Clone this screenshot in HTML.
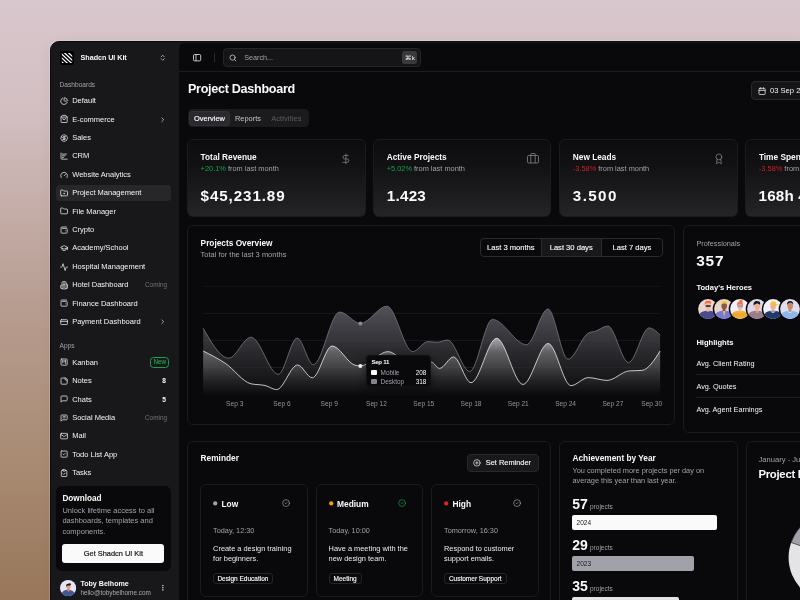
<!DOCTYPE html>
<html lang="en"><head><meta charset="utf-8"><title>Project Dashboard</title>
<style>
html,body{margin:0;padding:0}
body{width:800px;height:600px;overflow:hidden;position:relative;font-family:"Liberation Sans", sans-serif;
background:linear-gradient(180deg,#d8c7cd 0%,#d3bfc2 18%,#b89e92 50%,#a88a72 78%,#98775a 100%)}
.b,.t,.ic{position:absolute}
.t{white-space:nowrap}
.ic{display:block;overflow:visible}
#root{position:absolute;left:0;top:0;width:800px;height:600px;overflow:hidden;will-change:transform}
</style></head><body><div id="root">
<div class="b" style="left:50px;top:41px;width:760px;height:570px;background:#18181b;border-radius:9px 0 0 0;border:1px solid #0b0b0d;box-sizing:border-box;box-shadow:0 0 0 1px rgba(255,255,255,.2), 0 2px 14px rgba(60,30,20,.06)"></div>
<div class="b" style="left:179px;top:43px;width:640px;height:570px;background:#09090b;border-radius:5px 0 0 0"></div>
<svg class="ic" style="left:60px;top:51px" width="14" height="14" viewBox="0 0 14 14"><rect width="14" height="14" rx="2.2" fill="#000"/><clipPath id="lc"><rect x="1.8" y="1.9" width="10.5" height="10.2"/></clipPath><g clip-path="url(#lc)" stroke="#fff" stroke-width="1.25"><line x1="-12.2" y1="-2.2" x2="7.800000000000001" y2="16.4"/><line x1="-8.1" y1="-2.2" x2="11.9" y2="16.4"/><line x1="-4" y1="-2.2" x2="16" y2="16.4"/><line x1="0.09999999999999964" y1="-2.2" x2="20.1" y2="16.4"/><line x1="4.199999999999999" y1="-2.2" x2="24.2" y2="16.4"/></g></svg>
<div class="t" style="top:52.4px;font-size:7.2px;font-weight:700;color:#fafafa;line-height:12px;left:80.6px;letter-spacing:-.05px;">Shadcn UI Kit</div>
<svg class="ic" style="left:159.25px;top:54.25px" width="7.5" height="7.5" viewBox="0 0 24 24" fill="none" stroke="#d4d4d8" stroke-width="2.3" stroke-linecap="round" stroke-linejoin="round" ><path d="m7 15 5 5 5-5"/><path d="m7 9 5-5 5 5"/></svg>
<div class="t" style="top:78.5px;font-size:6.6px;font-weight:400;color:#a1a1aa;line-height:12px;left:59.6px;">Dashboards</div>
<div class="b" style="left:56px;top:184.8px;width:115px;height:15.8px;background:#27272a;border-radius:3.5px"></div>
<svg class="ic" style="left:59.8px;top:96.9px" width="8.2" height="8.2" viewBox="0 0 24 24" fill="none" stroke="#e4e4e7" stroke-width="2.3" stroke-linecap="round" stroke-linejoin="round" ><path d="M21 12c.552 0 1.005-.449.95-.998a10 10 0 0 0-8.953-8.951c-.55-.055-.998.398-.998.95v8a1 1 0 0 0 1 1z"/><path d="M21.21 15.89A10 10 0 1 1 8 2.83"/></svg>
<div class="t" style="top:95.2px;font-size:7.5px;font-weight:400;color:#f4f4f5;line-height:12px;left:72.2px;">Default</div>
<svg class="ic" style="left:59.8px;top:115.3px" width="8.2" height="8.2" viewBox="0 0 24 24" fill="none" stroke="#e4e4e7" stroke-width="2.3" stroke-linecap="round" stroke-linejoin="round" ><path d="M6 2 3 6v14a2 2 0 0 0 2 2h14a2 2 0 0 0 2-2V6l-3-4Z"/><path d="M3 6h18"/><path d="M16 10a4 4 0 0 1-8 0"/></svg>
<div class="t" style="top:113.6px;font-size:7.5px;font-weight:400;color:#f4f4f5;line-height:12px;left:72.2px;">E-commerce</div>
<svg class="ic" style="left:59.8px;top:133.7px" width="8.2" height="8.2" viewBox="0 0 24 24" fill="none" stroke="#e4e4e7" stroke-width="2.3" stroke-linecap="round" stroke-linejoin="round" ><path d="M3.85 8.62a4 4 0 0 1 4.78-4.77 4 4 0 0 1 6.74 0 4 4 0 0 1 4.78 4.78 4 4 0 0 1 0 6.74 4 4 0 0 1-4.77 4.78 4 4 0 0 1-6.75 0 4 4 0 0 1-4.78-4.77 4 4 0 0 1 0-6.76Z"/><path d="M16 8h-6a2 2 0 1 0 0 4h4a2 2 0 1 1 0 4H8"/><path d="M12 18V6"/></svg>
<div class="t" style="top:132.0px;font-size:7.5px;font-weight:400;color:#f4f4f5;line-height:12px;left:72.2px;">Sales</div>
<svg class="ic" style="left:59.8px;top:152.1px" width="8.2" height="8.2" viewBox="0 0 24 24" fill="none" stroke="#e4e4e7" stroke-width="2.3" stroke-linecap="round" stroke-linejoin="round" ><path d="M3 3v16a2 2 0 0 0 2 2h16"/><path d="M7 11h8"/><path d="M7 16h3"/><path d="M7 6h12"/></svg>
<div class="t" style="top:150.4px;font-size:7.5px;font-weight:400;color:#f4f4f5;line-height:12px;left:72.2px;">CRM</div>
<svg class="ic" style="left:59.8px;top:170.5px" width="8.2" height="8.2" viewBox="0 0 24 24" fill="none" stroke="#e4e4e7" stroke-width="2.3" stroke-linecap="round" stroke-linejoin="round" ><path d="m12 14 4-4"/><path d="M3.34 19a10 10 0 1 1 17.32 0"/></svg>
<div class="t" style="top:168.8px;font-size:7.5px;font-weight:400;color:#f4f4f5;line-height:12px;left:72.2px;">Website Analytics</div>
<svg class="ic" style="left:59.8px;top:188.9px" width="8.2" height="8.2" viewBox="0 0 24 24" fill="none" stroke="#e4e4e7" stroke-width="2.3" stroke-linecap="round" stroke-linejoin="round" ><path d="M4 20h16a2 2 0 0 0 2-2V8a2 2 0 0 0-2-2h-7.93a2 2 0 0 1-1.66-.9l-.82-1.2A2 2 0 0 0 7.93 3H4a2 2 0 0 0-2 2v13c0 1.1.9 2 2 2Z"/><circle cx="12" cy="13" r="1"/></svg>
<div class="t" style="top:187.2px;font-size:7.5px;font-weight:400;color:#f4f4f5;line-height:12px;left:72.2px;">Project Management</div>
<svg class="ic" style="left:59.8px;top:207.3px" width="8.2" height="8.2" viewBox="0 0 24 24" fill="none" stroke="#e4e4e7" stroke-width="2.3" stroke-linecap="round" stroke-linejoin="round" ><path d="M20 20a2 2 0 0 0 2-2V8a2 2 0 0 0-2-2h-7.9a2 2 0 0 1-1.69-.9L9.6 3.9A2 2 0 0 0 7.93 3H4a2 2 0 0 0-2 2v13a2 2 0 0 0 2 2Z"/></svg>
<div class="t" style="top:205.6px;font-size:7.5px;font-weight:400;color:#f4f4f5;line-height:12px;left:72.2px;">File Manager</div>
<svg class="ic" style="left:59.8px;top:225.7px" width="8.2" height="8.2" viewBox="0 0 24 24" fill="none" stroke="#e4e4e7" stroke-width="2.3" stroke-linecap="round" stroke-linejoin="round" ><path d="M17 14h.01"/><path d="M7 7h12a2 2 0 0 1 2 2v10a2 2 0 0 1-2 2H5a2 2 0 0 1-2-2V5a2 2 0 0 1 2-2h14"/></svg>
<div class="t" style="top:224.0px;font-size:7.5px;font-weight:400;color:#f4f4f5;line-height:12px;left:72.2px;">Crypto</div>
<svg class="ic" style="left:59.8px;top:244.1px" width="8.2" height="8.2" viewBox="0 0 24 24" fill="none" stroke="#e4e4e7" stroke-width="2.3" stroke-linecap="round" stroke-linejoin="round" ><path d="M21.42 10.922a1 1 0 0 0-.019-1.838L12.83 5.18a2 2 0 0 0-1.66 0L2.6 9.08a1 1 0 0 0 0 1.832l8.57 3.908a2 2 0 0 0 1.66 0z"/><path d="M22 10v6"/><path d="M6 12.5V16a6 3 0 0 0 12 0v-3.5"/></svg>
<div class="t" style="top:242.4px;font-size:7.5px;font-weight:400;color:#f4f4f5;line-height:12px;left:72.2px;">Academy/School</div>
<svg class="ic" style="left:59.8px;top:262.5px" width="8.2" height="8.2" viewBox="0 0 24 24" fill="none" stroke="#e4e4e7" stroke-width="2.3" stroke-linecap="round" stroke-linejoin="round" ><path d="M22 12h-2.48a2 2 0 0 0-1.93 1.46l-2.35 8.36a.25.25 0 0 1-.48 0L9.24 2.18a.25.25 0 0 0-.48 0l-2.35 8.36A2 2 0 0 1 4.49 12H2"/></svg>
<div class="t" style="top:260.8px;font-size:7.5px;font-weight:400;color:#f4f4f5;line-height:12px;left:72.2px;">Hospital Management</div>
<svg class="ic" style="left:59.8px;top:280.9px" width="8.2" height="8.2" viewBox="0 0 24 24" fill="none" stroke="#e4e4e7" stroke-width="2.3" stroke-linecap="round" stroke-linejoin="round" ><path d="M6 22V4a2 2 0 0 1 2-2h8a2 2 0 0 1 2 2v18Z"/><path d="M6 12H4a2 2 0 0 0-2 2v6a2 2 0 0 0 2 2h2"/><path d="M18 9h2a2 2 0 0 1 2 2v9a2 2 0 0 1-2 2h-2"/><path d="M10 6h4"/><path d="M10 10h4"/><path d="M10 14h4"/><path d="M10 18h4"/></svg>
<div class="t" style="top:279.2px;font-size:7.5px;font-weight:400;color:#f4f4f5;line-height:12px;left:72.2px;">Hotel Dashboard</div>
<svg class="ic" style="left:59.8px;top:299.3px" width="8.2" height="8.2" viewBox="0 0 24 24" fill="none" stroke="#e4e4e7" stroke-width="2.3" stroke-linecap="round" stroke-linejoin="round" ><path d="M17 14h.01"/><path d="M7 7h12a2 2 0 0 1 2 2v10a2 2 0 0 1-2 2H5a2 2 0 0 1-2-2V5a2 2 0 0 1 2-2h14"/></svg>
<div class="t" style="top:297.6px;font-size:7.5px;font-weight:400;color:#f4f4f5;line-height:12px;left:72.2px;">Finance Dashboard</div>
<svg class="ic" style="left:59.8px;top:317.7px" width="8.2" height="8.2" viewBox="0 0 24 24" fill="none" stroke="#e4e4e7" stroke-width="2.3" stroke-linecap="round" stroke-linejoin="round" ><rect width="20" height="14" x="2" y="5" rx="2"/><line x1="2" x2="22" y1="10" y2="10"/></svg>
<div class="t" style="top:316.0px;font-size:7.5px;font-weight:400;color:#f4f4f5;line-height:12px;left:72.2px;">Payment Dashboard</div>
<svg class="ic" style="left:159.05px;top:115.65px" width="7.5" height="7.5" viewBox="0 0 24 24" fill="none" stroke="#d4d4d8" stroke-width="2.3" stroke-linecap="round" stroke-linejoin="round" ><path d="m9 18 6-6-6-6"/></svg>
<svg class="ic" style="left:159.05px;top:318.05px" width="7.5" height="7.5" viewBox="0 0 24 24" fill="none" stroke="#d4d4d8" stroke-width="2.3" stroke-linecap="round" stroke-linejoin="round" ><path d="m9 18 6-6-6-6"/></svg>
<div class="t" style="top:279.2px;font-size:6.4px;font-weight:400;color:#71717a;line-height:12px;right:633px;text-align:right;">Coming</div>
<div class="t" style="top:340.4px;font-size:6.6px;font-weight:400;color:#a1a1aa;line-height:12px;left:59.6px;">Apps</div>
<svg class="ic" style="left:59.8px;top:358.4px" width="8.2" height="8.2" viewBox="0 0 24 24" fill="none" stroke="#e4e4e7" stroke-width="2.3" stroke-linecap="round" stroke-linejoin="round" ><rect width="18" height="18" x="3" y="3" rx="2"/><path d="M8 7v7"/><path d="M12 7v4"/><path d="M16 7v9"/></svg>
<div class="t" style="top:356.7px;font-size:7.5px;font-weight:400;color:#f4f4f5;line-height:12px;left:72.2px;">Kanban</div>
<svg class="ic" style="left:59.8px;top:376.9px" width="8.2" height="8.2" viewBox="0 0 24 24" fill="none" stroke="#e4e4e7" stroke-width="2.3" stroke-linecap="round" stroke-linejoin="round" ><path d="M16 3H5a2 2 0 0 0-2 2v14a2 2 0 0 0 2 2h14a2 2 0 0 0 2-2V8Z"/><path d="M15 3v4a2 2 0 0 0 2 2h4"/></svg>
<div class="t" style="top:375.2px;font-size:7.5px;font-weight:400;color:#f4f4f5;line-height:12px;left:72.2px;">Notes</div>
<svg class="ic" style="left:59.8px;top:395.2px" width="8.2" height="8.2" viewBox="0 0 24 24" fill="none" stroke="#e4e4e7" stroke-width="2.3" stroke-linecap="round" stroke-linejoin="round" ><path d="M21 15a2 2 0 0 1-2 2H7l-4 4V5a2 2 0 0 1 2-2h14a2 2 0 0 1 2 2z"/></svg>
<div class="t" style="top:393.5px;font-size:7.5px;font-weight:400;color:#f4f4f5;line-height:12px;left:72.2px;">Chats</div>
<svg class="ic" style="left:59.8px;top:413.6px" width="8.2" height="8.2" viewBox="0 0 24 24" fill="none" stroke="#e4e4e7" stroke-width="2.3" stroke-linecap="round" stroke-linejoin="round" ><path d="M21 15a2 2 0 0 1-2 2H7l-4 4V5a2 2 0 0 1 2-2h14a2 2 0 0 1 2 2z"/><path d="M14.8 7.5a1.84 1.84 0 0 0-2.6 0l-.2.3-.3-.3a1.84 1.84 0 1 0-2.4 2.8L12 13l2.7-2.7c.9-.9.8-2.1.1-2.8"/></svg>
<div class="t" style="top:411.9px;font-size:7.5px;font-weight:400;color:#f4f4f5;line-height:12px;left:72.2px;">Social Media</div>
<svg class="ic" style="left:59.8px;top:432.1px" width="8.2" height="8.2" viewBox="0 0 24 24" fill="none" stroke="#e4e4e7" stroke-width="2.3" stroke-linecap="round" stroke-linejoin="round" ><rect width="20" height="16" x="2" y="4" rx="2"/><path d="m22 7-8.97 5.7a1.94 1.94 0 0 1-2.06 0L2 7"/></svg>
<div class="t" style="top:430.4px;font-size:7.5px;font-weight:400;color:#f4f4f5;line-height:12px;left:72.2px;">Mail</div>
<svg class="ic" style="left:59.8px;top:450.4px" width="8.2" height="8.2" viewBox="0 0 24 24" fill="none" stroke="#e4e4e7" stroke-width="2.3" stroke-linecap="round" stroke-linejoin="round" ><rect width="18" height="18" x="3" y="3" rx="2"/><path d="m9 12 2 2 4-4"/></svg>
<div class="t" style="top:448.7px;font-size:7.5px;font-weight:400;color:#f4f4f5;line-height:12px;left:72.2px;">Todo List App</div>
<svg class="ic" style="left:59.8px;top:468.9px" width="8.2" height="8.2" viewBox="0 0 24 24" fill="none" stroke="#e4e4e7" stroke-width="2.3" stroke-linecap="round" stroke-linejoin="round" ><rect width="8" height="4" x="8" y="2" rx="1" ry="1"/><path d="M16 4h2a2 2 0 0 1 2 2v14a2 2 0 0 1-2 2H6a2 2 0 0 1-2-2V6a2 2 0 0 1 2-2h2"/><path d="m9 14 2 2 4-4"/></svg>
<div class="t" style="top:467.2px;font-size:7.5px;font-weight:400;color:#f4f4f5;line-height:12px;left:72.2px;">Tasks</div>
<div class="b" style="left:150.3px;top:357.2px;width:18.8px;height:10.7px;border:1px solid #16a34a;border-radius:3.5px;box-sizing:border-box"></div>
<div class="t" style="top:356.2px;font-size:6.3px;font-weight:400;color:#1fb655;line-height:12px;left:59.8px;width:200px;text-align:center;">New</div>
<div class="t" style="top:375.0px;font-size:6.6px;font-weight:700;color:#fafafa;line-height:12px;right:634px;text-align:right;">8</div>
<div class="t" style="top:393.9px;font-size:6.6px;font-weight:700;color:#fafafa;line-height:12px;right:634px;text-align:right;">5</div>
<div class="t" style="top:411.7px;font-size:6.4px;font-weight:400;color:#71717a;line-height:12px;right:633px;text-align:right;">Coming</div>
<div class="b" style="left:56px;top:486px;width:114.5px;height:85px;background:#09090b;border-radius:6px"></div>
<div class="t" style="top:493.0px;font-size:8.2px;font-weight:700;color:#fafafa;line-height:12px;left:62.4px;">Download</div>
<div class="t" style="top:505.0px;font-size:7.5px;font-weight:400;color:#a1a1aa;line-height:12px;left:62.4px;">Unlock lifetime access to all</div>
<div class="t" style="top:515.3px;font-size:7.5px;font-weight:400;color:#a1a1aa;line-height:12px;left:62.4px;">dashboards, templates and</div>
<div class="t" style="top:525.6px;font-size:7.5px;font-weight:400;color:#a1a1aa;line-height:12px;left:62.4px;">components.</div>
<div class="b" style="left:62.4px;top:544.4px;width:102px;height:18.2px;background:#fafafa;border-radius:3px"></div>
<div class="t" style="top:547.6px;font-size:7.4px;font-weight:400;color:#18181b;line-height:12px;left:13.4px;width:200px;text-align:center;-webkit-text-stroke:.2px #18181b;">Get Shadcn UI Kit</div>
<svg class="ic" style="left:60px;top:579.6px" width="16.2" height="16.2" viewBox="0 0 16 16"><clipPath id="uc"><circle cx="8" cy="8" r="8"/></clipPath><g clip-path="url(#uc)"><rect width="16" height="16" fill="#e9e4f4"/><path d="M1.200 17c0-5 2.200-7.300 6.600-7.300s7.400 2.300 7.400 7.300z" fill="#3f5794"/><path d="M7.200 8.600h2.300v2.200l-1.300.7-1-.7z" fill="#e08a60"/><ellipse cx="8.500" cy="7" rx="2" ry="2.400" fill="#ea9a70"/><path d="M6.300 6.800c-.7-2.100.4-3.200 1.900-3 .9-.9 2.500-.9 2.600.4.100.9-.5 1.300-1.200 1.300-1 .1-1.800-.2-2.300.2-.4.300-.6.700-1 1.100z" fill="#1b1b25"/></g></svg>
<div class="t" style="top:577.8px;font-size:7.1px;font-weight:700;color:#fafafa;line-height:12px;left:80.4px;">Toby Belhome</div>
<div class="t" style="top:586.6px;font-size:6.4px;font-weight:400;color:#a8a8b0;line-height:12px;left:80.4px;">hello@tobybelhome.com</div>
<svg class="ic" style="left:159.25px;top:584.25px" width="7.5" height="7.5" viewBox="0 0 24 24" fill="none" stroke="#d4d4d8" stroke-width="2.3" stroke-linecap="round" stroke-linejoin="round" ><circle cx="12" cy="12" r="1"/><circle cx="12" cy="5" r="1"/><circle cx="12" cy="19" r="1"/></svg>
<div class="b" style="left:179px;top:71px;width:640px;height:1px;background:#1d1d20"></div>
<svg class="ic" style="left:192.8px;top:53.6px" width="8.2" height="7.4" viewBox="0 0 8.2 7.4" fill="none" stroke="#e4e4e7" stroke-width=".85"><rect x=".5" y=".5" width="7.2" height="6.4" rx="1.2"/><path d="M3 .5v6.400"/></svg>
<div class="b" style="left:214px;top:53.2px;width:1px;height:8.4px;background:#2a2a2e"></div>
<div class="b" style="left:223.2px;top:48.4px;width:198px;height:18.2px;background:#151518;border:1px solid #252528;border-radius:4px;box-sizing:border-box"></div>
<svg class="ic" style="left:229.4px;top:53.7px" width="7.8" height="7.8" viewBox="0 0 24 24" fill="none" stroke="#d4d4d8" stroke-width="2.3" stroke-linecap="round" stroke-linejoin="round" ><circle cx="11" cy="11" r="8"/><path d="m21 21-4.3-4.3"/></svg>
<div class="t" style="top:51.6px;font-size:7.2px;font-weight:400;color:#a1a1aa;line-height:12px;left:244.3px;">Search...</div>
<div class="b" style="left:402.2px;top:51.2px;width:14.8px;height:12.7px;background:#39393c;border-radius:2.5px"></div>
<div class="t" style="top:51.7px;font-size:6.4px;font-weight:400;color:#fafafa;line-height:12px;left:405px;font-family:'DejaVu Sans',sans-serif;">&#8984;</div>
<div class="t" style="top:51.5px;font-size:6.2px;font-weight:400;color:#fafafa;line-height:12px;left:411.8px;">k</div>
<div class="t" style="top:80.8px;font-size:12.6px;font-weight:700;color:#fafafa;line-height:16px;left:188px;letter-spacing:-.3px;">Project Dashboard</div>
<div class="b" style="left:751px;top:81px;width:70px;height:19px;background:#151518;border:1px solid #29292d;border-radius:4px;box-sizing:border-box"></div>
<svg class="ic" style="left:757.5px;top:86.5px" width="8.2" height="8.2" viewBox="0 0 24 24" fill="none" stroke="#e4e4e7" stroke-width="2.3" stroke-linecap="round" stroke-linejoin="round" ><path d="M8 2v4"/><path d="M16 2v4"/><rect width="18" height="18" x="3" y="4" rx="2"/><path d="M3 10h18"/></svg>
<div class="t" style="top:84.7px;font-size:7.6px;font-weight:400;color:#f4f4f5;line-height:12px;left:770px;">03 Sep 2025 - 30 Sep 2025</div>
<div class="b" style="left:187.7px;top:108.7px;width:121px;height:18.5px;background:#1b1b1e;border-radius:4.5px"></div>
<div class="b" style="left:189.3px;top:110.7px;width:40.7px;height:14.9px;background:#2a2a2e;border-radius:3.2px;border:1px solid #323236;box-sizing:border-box"></div>
<div class="t" style="top:112.7px;font-size:7.45px;font-weight:400;color:#fafafa;line-height:12px;left:109.5px;width:200px;text-align:center;-webkit-text-stroke:.15px #fafafa;">Overview</div>
<div class="t" style="top:112.7px;font-size:7.45px;font-weight:400;color:#c4c4cb;line-height:12px;left:148px;width:200px;text-align:center;">Reports</div>
<div class="t" style="top:112.7px;font-size:7.45px;font-weight:400;color:#5c5c64;line-height:12px;left:186.3px;width:200px;text-align:center;letter-spacing:.1px;">Activities</div>
<div class="b" style="left:187px;top:139px;width:179px;height:78.2px;background:linear-gradient(180deg,#0c0c0e 0%,#121214 35%,#242427 100%);border:1px solid #1b1b1e;border-radius:6px;box-sizing:border-box"></div>
<div class="t" style="top:150.5px;font-size:8.3px;font-weight:700;color:#fafafa;line-height:12px;left:200.60000000000002px;">Total Revenue</div>
<div class="t" style="top:162.9px;font-size:7.4px;font-weight:400;color:#a1a1aa;line-height:12px;left:200.60000000000002px;"><span style="color:#16a34a">+20.1%</span> from last month</div>
<div class="t" style="top:186.1px;font-size:15.2px;font-weight:700;color:#fafafa;line-height:20px;left:200.60000000000002px;letter-spacing:0.89px;">$45,231.89</div>
<svg class="ic" style="left:340.4px;top:152.9px" width="11.8" height="11.8" viewBox="0 0 24 24" fill="none" stroke="#85858e" stroke-width="1.5" stroke-linecap="round" stroke-linejoin="round" ><line x1="12" x2="12" y1="2" y2="22"/><path d="M17 5H9.5a3.5 3.5 0 0 0 0 7h5a3.5 3.5 0 0 1 0 7H6"/></svg>
<div class="b" style="left:373px;top:139px;width:178px;height:78.2px;background:linear-gradient(180deg,#0c0c0e 0%,#121214 35%,#242427 100%);border:1px solid #1b1b1e;border-radius:6px;box-sizing:border-box"></div>
<div class="t" style="top:150.5px;font-size:8.3px;font-weight:700;color:#fafafa;line-height:12px;left:386.7px;">Active Projects</div>
<div class="t" style="top:162.9px;font-size:7.4px;font-weight:400;color:#a1a1aa;line-height:12px;left:386.7px;"><span style="color:#16a34a">+5.02%</span> from last month</div>
<div class="t" style="top:186.1px;font-size:15.2px;font-weight:700;color:#fafafa;line-height:20px;left:386.7px;letter-spacing:0.28px;">1.423</div>
<svg class="ic" style="left:526.5px;top:153px" width="12" height="10.5" viewBox="0 0 12 10.5" fill="none" stroke="#85858e" stroke-width=".8" stroke-linejoin="round"><rect x=".5" y="2.500" width="11" height="7.500" rx="1.200"/><path d="M3.800 2.500V1.300a.8.800 0 0 1 .8-.8h2.800a.8.800 0 0 1 .8.800V2.500M3.800 2.500V10M8.200 2.500V10"/></svg>
<div class="b" style="left:559px;top:139px;width:179px;height:78.2px;background:linear-gradient(180deg,#0c0c0e 0%,#121214 35%,#242427 100%);border:1px solid #1b1b1e;border-radius:6px;box-sizing:border-box"></div>
<div class="t" style="top:150.5px;font-size:8.3px;font-weight:700;color:#fafafa;line-height:12px;left:572.8px;">New Leads</div>
<div class="t" style="top:162.9px;font-size:7.4px;font-weight:400;color:#a1a1aa;line-height:12px;left:572.8px;"><span style="color:#d11f26">-3.58%</span> from last month</div>
<div class="t" style="top:186.1px;font-size:15.2px;font-weight:700;color:#fafafa;line-height:20px;left:572.8px;letter-spacing:1.4px;">3.500</div>
<svg class="ic" style="left:712.5px;top:152.7px" width="11.8" height="11.8" viewBox="0 0 24 24" fill="none" stroke="#85858e" stroke-width="1.5" stroke-linecap="round" stroke-linejoin="round" ><path d="m15.477 12.89 1.515 8.526a.5.5 0 0 1-.81.47l-3.58-2.687a1 1 0 0 0-1.197 0l-3.586 2.686a.5.5 0 0 1-.81-.469l1.514-8.526"/><circle cx="12" cy="8" r="6"/></svg>
<div class="b" style="left:745px;top:139px;width:179px;height:78.2px;background:linear-gradient(180deg,#0c0c0e 0%,#121214 35%,#242427 100%);border:1px solid #1b1b1e;border-radius:6px;box-sizing:border-box"></div>
<div class="t" style="top:150.5px;font-size:8.3px;font-weight:700;color:#fafafa;line-height:12px;left:758.9px;">Time Spent</div>
<div class="t" style="top:162.9px;font-size:7.4px;font-weight:400;color:#a1a1aa;line-height:12px;left:758.9px;"><span style="color:#d11f26">-3.58%</span> from last month</div>
<div class="t" style="top:186.1px;font-size:15.2px;font-weight:700;color:#fafafa;line-height:20px;left:758.5px;letter-spacing:0.2px;">168h 40m</div>
<svg class="ic" style="left:898.7px;top:152.9px" width="11.8" height="11.8" viewBox="0 0 24 24" fill="none" stroke="#85858e" stroke-width="1.5" stroke-linecap="round" stroke-linejoin="round" ><line x1="12" x2="12" y1="2" y2="22"/><path d="M17 5H9.5a3.5 3.5 0 0 0 0 7h5a3.5 3.5 0 0 1 0 7H6"/></svg>
<div class="b" style="left:187.3px;top:225px;width:488.2px;height:200px;background:#09090b;border:1px solid #1b1b1e;border-radius:6px;box-sizing:border-box"></div>
<div class="t" style="top:236.7px;font-size:8.3px;font-weight:700;color:#fafafa;line-height:12px;left:200.6px;">Projects Overview</div>
<div class="t" style="top:248.9px;font-size:7.5px;font-weight:400;color:#a1a1aa;line-height:12px;left:200.6px;">Total for the last 3 months</div>
<div class="b" style="left:480.3px;top:238px;width:182.7px;height:18.7px;border:1px solid #2a2a2e;border-radius:4px;box-sizing:border-box;background:#09090b"></div>
<div class="b" style="left:541px;top:239px;width:60.8px;height:16.7px;background:#18181b;border-left:1px solid #2a2a2e;border-right:1px solid #2a2a2e;box-sizing:border-box"></div>
<div class="t" style="top:241.5px;font-size:7.6px;font-weight:400;color:#fafafa;line-height:12px;left:410.8px;width:200px;text-align:center;-webkit-text-stroke:.12px #fafafa;">Last 3 months</div>
<div class="t" style="top:241.5px;font-size:7.6px;font-weight:400;color:#fafafa;line-height:12px;left:471.2px;width:200px;text-align:center;-webkit-text-stroke:.12px #fafafa;">Last 30 days</div>
<div class="t" style="top:241.5px;font-size:7.6px;font-weight:400;color:#fafafa;line-height:12px;left:532px;width:200px;text-align:center;-webkit-text-stroke:.12px #fafafa;">Last 7 days</div>
<svg class="ic" style="left:0;top:0" width="800" height="600" viewBox="0 0 800 600"><defs><linearGradient id="gd" x1="0" y1="300" x2="0" y2="394.5" gradientUnits="userSpaceOnUse"><stop offset="0" stop-color="#5a5a62" stop-opacity=".95"/><stop offset=".55" stop-color="#2c2c30" stop-opacity=".95"/><stop offset="1" stop-color="#0d0d0f" stop-opacity=".9"/></linearGradient><linearGradient id="gm" x1="0" y1="336" x2="0" y2="394.5" gradientUnits="userSpaceOnUse"><stop offset="0" stop-color="#b4b4b6"/><stop offset=".14" stop-color="#8a8a8c"/><stop offset=".27" stop-color="#626265"/><stop offset=".5" stop-color="#464649"/><stop offset=".75" stop-color="#242427"/><stop offset="1" stop-color="#0b0b0d"/></linearGradient></defs><line x1="203.2" x2="660.1" y1="286.3" y2="286.3" stroke="#161619" stroke-width="1"/><line x1="203.2" x2="660.1" y1="313.4" y2="313.4" stroke="#161619" stroke-width="1"/><line x1="203.2" x2="660.1" y1="340.4" y2="340.4" stroke="#161619" stroke-width="1"/><line x1="203.2" x2="660.1" y1="367.5" y2="367.5" stroke="#161619" stroke-width="1"/><line x1="203.2" x2="660.1" y1="394.5" y2="394.5" stroke="#161619" stroke-width="1"/><path d="M203.2,328.3C211.7,343.2 220.3,358.2 228.8,358.2C236.2,358.2 243.6,337.2 251.0,337.2C260.1,337.2 269.2,374.3 278.3,374.3C284.6,374.3 290.9,338.1 297.2,338.1C302.6,338.1 307.9,364.7 313.3,364.7C322.1,364.7 330.8,312.0 339.6,312.0C346.5,312.0 353.5,323.4 360.4,323.4C369.3,323.4 378.1,306.2 387.0,306.2C395.5,306.2 404.1,351.6 412.6,351.6C417.7,351.6 422.9,341.6 428.0,341.6C431.0,341.6 434.0,342.3 437.0,342.3C440.5,342.3 444.1,340.0 447.6,340.0C455.0,340.0 462.4,371.5 469.8,371.5C477.3,371.5 484.9,319.4 492.4,319.4C503.8,319.4 515.1,344.7 526.5,344.7C533.7,344.7 540.8,309.0 548.0,309.0C554.7,309.0 561.3,359.2 568.0,359.2C574.8,359.2 581.6,336.5 588.4,333.0C590.7,331.8 593.1,331.9 595.4,331.2C599.5,329.9 603.7,326.0 607.8,326.0C614.7,326.0 621.6,362.5 628.5,362.5C635.4,362.5 642.2,327.9 649.1,327.9C652.8,327.9 656.4,331.4 660.1,334.9L660.1,394.5L203.2,394.5Z" fill="url(#gd)"/><path d="M203.2,328.3C211.7,343.2 220.3,358.2 228.8,358.2C236.2,358.2 243.6,337.2 251.0,337.2C260.1,337.2 269.2,374.3 278.3,374.3C284.6,374.3 290.9,338.1 297.2,338.1C302.6,338.1 307.9,364.7 313.3,364.7C322.1,364.7 330.8,312.0 339.6,312.0C346.5,312.0 353.5,323.4 360.4,323.4C369.3,323.4 378.1,306.2 387.0,306.2C395.5,306.2 404.1,351.6 412.6,351.6C417.7,351.6 422.9,341.6 428.0,341.6C431.0,341.6 434.0,342.3 437.0,342.3C440.5,342.3 444.1,340.0 447.6,340.0C455.0,340.0 462.4,371.5 469.8,371.5C477.3,371.5 484.9,319.4 492.4,319.4C503.8,319.4 515.1,344.7 526.5,344.7C533.7,344.7 540.8,309.0 548.0,309.0C554.7,309.0 561.3,359.2 568.0,359.2C574.8,359.2 581.6,336.5 588.4,333.0C590.7,331.8 593.1,331.9 595.4,331.2C599.5,329.9 603.7,326.0 607.8,326.0C614.7,326.0 621.6,362.5 628.5,362.5C635.4,362.5 642.2,327.9 649.1,327.9C652.8,327.9 656.4,331.4 660.1,334.9" fill="none" stroke="#77777f" stroke-width=".8"/><path d="M203.2,351.0C210.6,354.7 217.9,358.4 225.3,363.3C233.9,369.0 242.4,381.7 251.0,383.8C255.7,384.9 260.3,384.4 265.0,385.5C268.9,386.4 272.7,389.6 276.6,389.6C283.6,389.6 290.6,365.0 297.6,365.0C302.5,365.0 307.4,377.8 312.3,377.8C318.9,377.8 325.5,346.0 332.1,346.0C339.7,346.0 347.4,363.2 355.0,365.2C356.8,365.7 358.6,365.9 360.4,365.9C369.6,365.9 378.9,351.6 388.1,351.6C396.1,351.6 404.0,366.0 412.0,366.0C418.4,366.0 424.9,362.1 431.3,362.1C434.0,362.1 436.8,368.4 439.5,368.4C444.2,368.4 448.8,357.0 453.5,357.0C459.3,357.0 465.2,382.7 471.0,382.7C479.5,382.7 488.1,338.3 496.6,338.3C505.4,338.3 514.2,384.4 523.0,384.4C531.4,384.4 539.8,343.5 548.2,343.5C555.8,343.5 563.3,385.6 570.9,385.6C576.7,385.6 582.6,377.6 588.4,377.6C594.6,377.6 600.8,380.4 607.0,380.4C614.4,380.4 621.8,371.5 629.2,370.9C633.5,370.6 637.7,370.7 642.0,370.4C648.0,369.9 654.1,360.5 660.1,351.0L660.1,394.5L203.2,394.5Z" fill="url(#gm)"/><path d="M203.2,351.0C210.6,354.7 217.9,358.4 225.3,363.3C233.9,369.0 242.4,381.7 251.0,383.8C255.7,384.9 260.3,384.4 265.0,385.5C268.9,386.4 272.7,389.6 276.6,389.6C283.6,389.6 290.6,365.0 297.6,365.0C302.5,365.0 307.4,377.8 312.3,377.8C318.9,377.8 325.5,346.0 332.1,346.0C339.7,346.0 347.4,363.2 355.0,365.2C356.8,365.7 358.6,365.9 360.4,365.9C369.6,365.9 378.9,351.6 388.1,351.6C396.1,351.6 404.0,366.0 412.0,366.0C418.4,366.0 424.9,362.1 431.3,362.1C434.0,362.1 436.8,368.4 439.5,368.4C444.2,368.4 448.8,357.0 453.5,357.0C459.3,357.0 465.2,382.7 471.0,382.7C479.5,382.7 488.1,338.3 496.6,338.3C505.4,338.3 514.2,384.4 523.0,384.4C531.4,384.4 539.8,343.5 548.2,343.5C555.8,343.5 563.3,385.6 570.9,385.6C576.7,385.6 582.6,377.6 588.4,377.6C594.6,377.6 600.8,380.4 607.0,380.4C614.4,380.4 621.8,371.5 629.2,370.9C633.5,370.6 637.7,370.7 642.0,370.4C648.0,369.9 654.1,360.5 660.1,351.0" fill="none" stroke="#ececee" stroke-width=".8"/><line x1="203.2" x2="660.1" y1="313.4" y2="313.4" stroke="#ffffff" stroke-opacity=".025" stroke-width="1"/><line x1="203.2" x2="660.1" y1="340.4" y2="340.4" stroke="#ffffff" stroke-opacity=".025" stroke-width="1"/><line x1="203.2" x2="660.1" y1="367.5" y2="367.5" stroke="#ffffff" stroke-opacity=".025" stroke-width="1"/><circle cx="360.4" cy="323.4" r="2" fill="#8b8b96"/><circle cx="360.4" cy="365.9" r="2" fill="#fafafa"/></svg>
<div class="t" style="top:397.7px;font-size:6.6px;font-weight:400;color:#93939c;line-height:12px;left:134.7px;width:200px;text-align:center;">Sep 3</div>
<div class="t" style="top:397.7px;font-size:6.6px;font-weight:400;color:#93939c;line-height:12px;left:181.97px;width:200px;text-align:center;">Sep 6</div>
<div class="t" style="top:397.7px;font-size:6.6px;font-weight:400;color:#93939c;line-height:12px;left:229.24px;width:200px;text-align:center;">Sep 9</div>
<div class="t" style="top:397.7px;font-size:6.6px;font-weight:400;color:#93939c;line-height:12px;left:276.51px;width:200px;text-align:center;">Sep 12</div>
<div class="t" style="top:397.7px;font-size:6.6px;font-weight:400;color:#93939c;line-height:12px;left:323.78px;width:200px;text-align:center;">Sep 15</div>
<div class="t" style="top:397.7px;font-size:6.6px;font-weight:400;color:#93939c;line-height:12px;left:371.05px;width:200px;text-align:center;">Sep 18</div>
<div class="t" style="top:397.7px;font-size:6.6px;font-weight:400;color:#93939c;line-height:12px;left:418.32px;width:200px;text-align:center;">Sep 21</div>
<div class="t" style="top:397.7px;font-size:6.6px;font-weight:400;color:#93939c;line-height:12px;left:465.59px;width:200px;text-align:center;">Sep 24</div>
<div class="t" style="top:397.7px;font-size:6.6px;font-weight:400;color:#93939c;line-height:12px;left:512.86px;width:200px;text-align:center;">Sep 27</div>
<div class="t" style="top:397.7px;font-size:6.6px;font-weight:400;color:#93939c;line-height:12px;left:551.7px;width:200px;text-align:center;">Sep 30</div>
<div class="b" style="left:366px;top:354.6px;width:65.4px;height:32.8px;background:#09090b;border:1px solid #121214;border-radius:3.5px;box-sizing:border-box;box-shadow:0 2px 8px rgba(0,0,0,.5)"></div>
<div class="t" style="top:356.3px;font-size:6.2px;font-weight:700;color:#fafafa;line-height:12px;left:371.4px;letter-spacing:-.3px;">Sep 11</div>
<div class="b" style="left:371.3px;top:369.8px;width:5.4px;height:5.4px;background:#fafafa;border-radius:1px"></div>
<div class="b" style="left:371.3px;top:378.9px;width:5.4px;height:5.4px;background:#84848f;border-radius:1px"></div>
<div class="t" style="top:367.0px;font-size:6.4px;font-weight:400;color:#a1a1aa;line-height:12px;left:380.6px;">Mobile</div>
<div class="t" style="top:376.0px;font-size:6.4px;font-weight:400;color:#a1a1aa;line-height:12px;left:380.6px;">Desktop</div>
<div class="t" style="top:367.0px;font-size:6.4px;font-weight:400;color:#fafafa;line-height:12px;right:373.7px;text-align:right;font-family:"Liberation Mono", monospace;-webkit-text-stroke:.25px #fafafa;">208</div>
<div class="t" style="top:376.0px;font-size:6.4px;font-weight:400;color:#fafafa;line-height:12px;right:373.7px;text-align:right;font-family:"Liberation Mono", monospace;-webkit-text-stroke:.25px #fafafa;">318</div>
<div class="b" style="left:682.8px;top:225px;width:140px;height:207.8px;background:#09090b;border:1px solid #1b1b1e;border-radius:6px;box-sizing:border-box"></div>
<div class="t" style="top:238.4px;font-size:7.3px;font-weight:400;color:#a1a1aa;line-height:12px;left:696.4px;">Professionals</div>
<div class="t" style="top:250.6px;font-size:15.4px;font-weight:700;color:#fafafa;line-height:20px;left:696.2px;letter-spacing:.8px;">357</div>
<div class="t" style="top:282.3px;font-size:7.6px;font-weight:700;color:#fafafa;line-height:12px;left:696.4px;">Today's Heroes</div>
<div class="t" style="top:336.8px;font-size:7.6px;font-weight:700;color:#fafafa;line-height:12px;left:696.4px;">Highlights</div>
<div class="t" style="top:357.6px;font-size:7.3px;font-weight:400;color:#f4f4f5;line-height:12px;left:696.4px;">Avg. Client Rating</div>
<div class="b" style="left:696.4px;top:374px;width:120px;height:1px;background:#1f1f23"></div>
<div class="t" style="top:380.7px;font-size:7.3px;font-weight:400;color:#f4f4f5;line-height:12px;left:696.4px;">Avg. Quotes</div>
<div class="b" style="left:696.4px;top:397.2px;width:120px;height:1px;background:#1f1f23"></div>
<div class="t" style="top:403.7px;font-size:7.3px;font-weight:400;color:#f4f4f5;line-height:12px;left:696.4px;">Avg. Agent Earnings</div>
<svg class="ic" style="left:695.5px;top:296.6px" width="24" height="24" viewBox="-12 -12 24 24"><circle r="11.3" fill="#09090b"/><clipPath id="av0"><circle r="9.9"/></clipPath><g clip-path="url(#av0)"><rect x="-11" y="-11" width="22" height="22" fill="#e9d6cf"/><path d="M-9.800 11c0-6.800 3.200-9.200 9.800-9.200s9.800 2.400 9.800 9.200z" fill="#4b4b8f"/><rect x="-1.400" y="-1" width="2.800" height="3.600" fill="#f3b9a0"/><ellipse cx="0.200" cy="-3.100" rx="2.800" ry="3.200" fill="#f3b9a0"/><g transform="translate(0 -1.400) scale(.88)"><path d="M-3.600-3c-.8-3.200 1.500-5 4-4.600 2-.6 3.800 1 3.200 3.300-1.200-.6-3-.3-4.200-1.100-1 .5-2 1.300-3 2.400z" fill="#f26a3d"/><rect x="-2.800" y="-2.800" width="6" height="1.700" rx=".8" fill="#1a1a2a"/></g></g></svg>
<svg class="ic" style="left:711.8px;top:296.6px" width="24" height="24" viewBox="-12 -12 24 24"><circle r="11.3" fill="#09090b"/><clipPath id="av1"><circle r="9.9"/></clipPath><g clip-path="url(#av1)"><rect x="-11" y="-11" width="22" height="22" fill="#e7d5cb"/><path d="M-9.800 11c0-6.800 3.200-9.200 9.800-9.200s9.800 2.400 9.800 9.200z" fill="#7678de"/><rect x="-1.400" y="-1" width="2.800" height="3.600" fill="#8a5a44"/><ellipse cx="0.200" cy="-3.100" rx="2.800" ry="3.200" fill="#8a5a44"/><g transform="translate(0 -1.400) scale(.88)"><path d="M-3.200-3.400c0-2.800 1.600-4.200 3.600-4.200s3.400 1.400 3.300 3.600c-2.200-.9-4.600-.7-6.900.6z" fill="#f2c230"/><path d="M-1 4l1 7 1.600-7z" fill="#f2c230"/></g></g></svg>
<svg class="ic" style="left:728.3px;top:296.6px" width="24" height="24" viewBox="-12 -12 24 24"><circle r="11.3" fill="#09090b"/><clipPath id="av2"><circle r="9.9"/></clipPath><g clip-path="url(#av2)"><rect x="-11" y="-11" width="22" height="22" fill="#f1effb"/><path d="M-9.800 11c0-6.800 3.200-9.200 9.800-9.200s9.800 2.400 9.800 9.200z" fill="#f2b233"/><rect x="-1.400" y="-1" width="2.800" height="3.600" fill="#f3b9a0"/><ellipse cx="0.200" cy="-3.100" rx="2.800" ry="3.200" fill="#f3b9a0"/><g transform="translate(0 -1.400) scale(.88)"><path d="M-3.500-2.600c-.4-2.700 1.300-4.300 3.600-4.300s3.800 1.500 3.400 4c-1.400-1.300-5.200-1.500-7 .3z" fill="#e8794a"/><circle cx="1" cy="-7.200" r="2" fill="#e8794a"/><path d="M-8 7.500h16M-8 9.500h16" stroke="#d99a20" stroke-width=".7"/><rect x="-2.600" y="-2.600" width="5.600" height="1.500" rx=".7" fill="none" stroke="#4a6a9a" stroke-width=".5"/></g></g></svg>
<svg class="ic" style="left:744.8px;top:296.6px" width="24" height="24" viewBox="-12 -12 24 24"><circle r="11.3" fill="#09090b"/><clipPath id="av3"><circle r="9.9"/></clipPath><g clip-path="url(#av3)"><rect x="-11" y="-11" width="22" height="22" fill="#ddd7ea"/><path d="M-9.800 11c0-6.800 3.200-9.200 9.800-9.200s9.800 2.400 9.800 9.200z" fill="#9b7b8c"/><rect x="-1.400" y="-1" width="2.800" height="3.600" fill="#f0b090"/><ellipse cx="0.200" cy="-3.100" rx="2.800" ry="3.200" fill="#f0b090"/><g transform="translate(0 -1.400) scale(.88)"><path d="M-3.800-2.400c-.8-3.600 2-5.600 4.400-4.800 2.400-.6 3.600 1.600 2.800 4-1.200-1.200-2.600-1.500-3.600-1.500-1.400.3-2.600 1.100-3.600 2.300z" fill="#16161e"/><path d="M-1.600 4.200l1.600 1.300 1.600-1.300-.3 2-1.300-.8-1.300.8z" fill="#f2c230"/></g></g></svg>
<svg class="ic" style="left:761.2px;top:296.6px" width="24" height="24" viewBox="-12 -12 24 24"><circle r="11.3" fill="#09090b"/><clipPath id="av4"><circle r="9.9"/></clipPath><g clip-path="url(#av4)"><rect x="-11" y="-11" width="22" height="22" fill="#f1effb"/><path d="M-9.800 11c0-6.800 3.200-9.200 9.800-9.200s9.800 2.400 9.800 9.200z" fill="#1f3a6e"/><rect x="-1.400" y="-1" width="2.800" height="3.600" fill="#f0b090"/><ellipse cx="0.200" cy="-3.100" rx="2.800" ry="3.200" fill="#f0b090"/><g transform="translate(0 -1.400) scale(.88)"><path d="M-3.200-3.200c0-2.600 1.500-4 3.500-4s3.500 1.200 3.500 3.400l2.400.5c.3.500-.1.900-.6.900-3-.6-6-.8-8.800-.8z" fill="#f4c13a"/><path d="M-2.800 4.200l2.800 1.600 2.800-1.600" stroke="#e9eef8" stroke-width=".9" fill="none"/></g></g></svg>
<svg class="ic" style="left:777.7px;top:296.6px" width="24" height="24" viewBox="-12 -12 24 24"><circle r="11.3" fill="#09090b"/><clipPath id="av5"><circle r="9.9"/></clipPath><g clip-path="url(#av5)"><rect x="-11" y="-11" width="22" height="22" fill="#e1ddee"/><path d="M-9.800 11c0-6.800 3.200-9.200 9.800-9.200s9.800 2.400 9.800 9.200z" fill="#8db7ec"/><rect x="-1.400" y="-1" width="2.800" height="3.600" fill="#c98a64"/><ellipse cx="0.200" cy="-3.100" rx="2.800" ry="3.200" fill="#c98a64"/><g transform="translate(0 -1.400) scale(.88)"><path d="M-3.300-3c-.4-2.800 1.200-4.400 3.500-4.400s3.800 1.400 3.400 4.200c-.6-1.400-1.500-2-2.600-2.200-1.600-.1-3.200.6-4.300 2.400z" fill="#15151c"/><path d="M-2.800 4.200l2.800 1.800 2.800-1.800" stroke="#dfeafa" stroke-width=".9" fill="none"/></g></g></svg>
<div class="b" style="left:187.3px;top:441px;width:364px;height:180px;background:#09090b;border:1px solid #1b1b1e;border-radius:6px;box-sizing:border-box"></div>
<div class="t" style="top:452.1px;font-size:8.3px;font-weight:700;color:#fafafa;line-height:12px;left:200.6px;">Reminder</div>
<div class="b" style="left:466.6px;top:454px;width:72px;height:18.4px;background:#19191c;border:1px solid #28282c;border-radius:4px;box-sizing:border-box"></div>
<svg class="ic" style="left:473.2px;top:459.3px" width="7.8" height="7.8" viewBox="0 0 24 24" fill="none" stroke="#e4e4e7" stroke-width="2.3" stroke-linecap="round" stroke-linejoin="round" ><circle cx="12" cy="12" r="10"/><path d="M8 12h8"/><path d="M12 8v8"/></svg>
<div class="t" style="top:457.3px;font-size:7.4px;font-weight:400;color:#fafafa;line-height:12px;left:485.8px;-webkit-text-stroke:.12px #fafafa;">Set Reminder</div>
<div class="b" style="left:200.3px;top:484.4px;width:107.5px;height:112.6px;background:#09090b;border:1px solid #1b1b1e;border-radius:6px;box-sizing:border-box"></div>
<svg class="ic" style="left:212.3px;top:500px" width="7" height="7" viewBox="0 0 7 7"><circle cx="3.200" cy="3.400" r="2.150" fill="#a1a1b0"/></svg>
<div class="t" style="top:497.5px;font-size:8.4px;font-weight:700;color:#fafafa;line-height:12px;left:221.5px;">Low</div>
<svg class="ic" style="left:282.1px;top:499.2px" width="8.2" height="8.2" viewBox="0 0 24 24" fill="none" stroke="#a6a6b8" stroke-width="1.9" stroke-linecap="round" stroke-linejoin="round" ><circle cx="12" cy="12" r="10"/><path d="m9 12 2 2 4-4"/></svg>
<div class="t" style="top:524.6px;font-size:7.3px;font-weight:400;color:#a1a1aa;line-height:12px;left:213.10000000000002px;">Today, 12:30</div>
<div class="t" style="top:542.5px;font-size:7.4px;font-weight:400;color:#ededf0;line-height:12px;left:213.10000000000002px;">Create a design training</div>
<div class="t" style="top:552.7px;font-size:7.4px;font-weight:400;color:#ededf0;line-height:12px;left:213.10000000000002px;">for beginners.</div>
<div class="b" style="left:213.10000000000002px;top:573.2px;width:59.6px;height:11px;border:1px solid #252528;border-radius:3px;box-sizing:border-box"></div>
<div class="t" style="top:572.8px;font-size:6.5px;font-weight:400;color:#fafafa;line-height:12px;left:142.9px;width:200px;text-align:center;-webkit-text-stroke:.14px #fafafa;">Design Education</div>
<div class="b" style="left:315.8px;top:484.4px;width:107.5px;height:112.6px;background:#09090b;border:1px solid #1b1b1e;border-radius:6px;box-sizing:border-box"></div>
<svg class="ic" style="left:327.8px;top:500px" width="7" height="7" viewBox="0 0 7 7"><circle cx="3.200" cy="3.400" r="2.150" fill="#f59e0b"/></svg>
<div class="t" style="top:497.5px;font-size:8.4px;font-weight:700;color:#fafafa;line-height:12px;left:337.0px;">Medium</div>
<svg class="ic" style="left:397.6px;top:499.2px" width="8.2" height="8.2" viewBox="0 0 24 24" fill="none" stroke="#16a34a" stroke-width="1.9" stroke-linecap="round" stroke-linejoin="round" ><circle cx="12" cy="12" r="10"/><path d="m9 12 2 2 4-4"/></svg>
<div class="t" style="top:524.6px;font-size:7.3px;font-weight:400;color:#a1a1aa;line-height:12px;left:328.6px;">Today, 10:00</div>
<div class="t" style="top:542.5px;font-size:7.4px;font-weight:400;color:#ededf0;line-height:12px;left:328.6px;">Have a meeting with the</div>
<div class="t" style="top:552.7px;font-size:7.4px;font-weight:400;color:#ededf0;line-height:12px;left:328.6px;">new design team.</div>
<div class="b" style="left:328.6px;top:573.2px;width:33px;height:11px;border:1px solid #252528;border-radius:3px;box-sizing:border-box"></div>
<div class="t" style="top:572.8px;font-size:6.5px;font-weight:400;color:#fafafa;line-height:12px;left:245.1px;width:200px;text-align:center;-webkit-text-stroke:.14px #fafafa;">Meeting</div>
<div class="b" style="left:431.2px;top:484.4px;width:107.5px;height:112.6px;background:#09090b;border:1px solid #1b1b1e;border-radius:6px;box-sizing:border-box"></div>
<svg class="ic" style="left:443.2px;top:500px" width="7" height="7" viewBox="0 0 7 7"><circle cx="3.200" cy="3.400" r="2.150" fill="#dc2626"/></svg>
<div class="t" style="top:497.5px;font-size:8.4px;font-weight:700;color:#fafafa;line-height:12px;left:452.4px;">High</div>
<svg class="ic" style="left:513.0px;top:499.2px" width="8.2" height="8.2" viewBox="0 0 24 24" fill="none" stroke="#a6a6b8" stroke-width="1.9" stroke-linecap="round" stroke-linejoin="round" ><circle cx="12" cy="12" r="10"/><path d="m9 12 2 2 4-4"/></svg>
<div class="t" style="top:524.6px;font-size:7.3px;font-weight:400;color:#a1a1aa;line-height:12px;left:444.0px;">Tomorrow, 16:30</div>
<div class="t" style="top:542.5px;font-size:7.4px;font-weight:400;color:#ededf0;line-height:12px;left:444.0px;">Respond to customer</div>
<div class="t" style="top:552.7px;font-size:7.4px;font-weight:400;color:#ededf0;line-height:12px;left:444.0px;">support emails.</div>
<div class="b" style="left:444.0px;top:573.2px;width:62.5px;height:11px;border:1px solid #252528;border-radius:3px;box-sizing:border-box"></div>
<div class="t" style="top:572.8px;font-size:6.5px;font-weight:400;color:#fafafa;line-height:12px;left:375.25px;width:200px;text-align:center;-webkit-text-stroke:.14px #fafafa;">Customer Support</div>
<div class="b" style="left:559px;top:441px;width:179px;height:180px;background:#09090b;border:1px solid #1b1b1e;border-radius:6px;box-sizing:border-box"></div>
<div class="t" style="top:452.1px;font-size:8.3px;font-weight:700;color:#fafafa;line-height:12px;left:572.5px;">Achievement by Year</div>
<div class="t" style="top:464.8px;font-size:7.35px;font-weight:400;color:#a1a1aa;line-height:12px;left:572.5px;">You completed more projects per day on</div>
<div class="t" style="top:474.8px;font-size:7.35px;font-weight:400;color:#a1a1aa;line-height:12px;left:572.5px;">average this year than last year.</div>
<div class="t" style="top:495.2px;font-size:14px;font-weight:700;color:#fafafa;line-height:18px;left:572.3px;">57</div>
<div class="t" style="top:500.6px;font-size:6.5px;font-weight:400;color:#a1a1aa;line-height:12px;left:590px;">projects</div>
<div class="b" style="left:572.3px;top:515.2px;width:144.5px;height:14.6px;background:#fafafa;border-radius:2px"></div>
<div class="t" style="top:516.6px;font-size:6.5px;font-weight:400;color:#18181b;line-height:12px;left:576.6px;">2024</div>
<div class="t" style="top:536.2px;font-size:14px;font-weight:700;color:#fafafa;line-height:18px;left:572.3px;">29</div>
<div class="t" style="top:541.6px;font-size:6.5px;font-weight:400;color:#a1a1aa;line-height:12px;left:590px;">projects</div>
<div class="b" style="left:572.3px;top:556.2px;width:121.8px;height:14.6px;background:#a1a1aa;border-radius:2px"></div>
<div class="t" style="top:557.6px;font-size:6.5px;font-weight:400;color:#18181b;line-height:12px;left:576.6px;">2023</div>
<div class="t" style="top:577.2px;font-size:14px;font-weight:700;color:#fafafa;line-height:18px;left:572.3px;">35</div>
<div class="t" style="top:582.6px;font-size:6.5px;font-weight:400;color:#a1a1aa;line-height:12px;left:590px;">projects</div>
<div class="b" style="left:572.3px;top:597.2px;width:106.3px;height:14.6px;background:#e4e4e7;border-radius:2px"></div>
<div class="t" style="top:598.6px;font-size:6.5px;font-weight:400;color:#18181b;line-height:12px;left:576.6px;">2022</div>
<div class="b" style="left:745.6px;top:441px;width:100px;height:180px;background:#09090b;border:1px solid #1b1b1e;border-radius:6px;box-sizing:border-box"></div>
<div class="t" style="top:453.6px;font-size:7.6px;font-weight:400;color:#a1a1aa;line-height:12px;left:758.5px;">January - June 2024</div>
<div class="t" style="top:465.9px;font-size:11.3px;font-weight:700;color:#fafafa;line-height:16px;left:758.4px;letter-spacing:-.25px;">Project Efficiency</div>
<svg class="ic" style="left:0;top:0" width="800" height="600" viewBox="0 0 800 600"><circle cx="833.6" cy="557.5" r="45" fill="#e4e4e7"/><path d="M833.6,557.5L791.2,542.5A45,45 0 0 1 833.6,512.5Z" fill="#a1a1aa" stroke="#09090b" stroke-width=".6"/></svg>
</div></body></html>
